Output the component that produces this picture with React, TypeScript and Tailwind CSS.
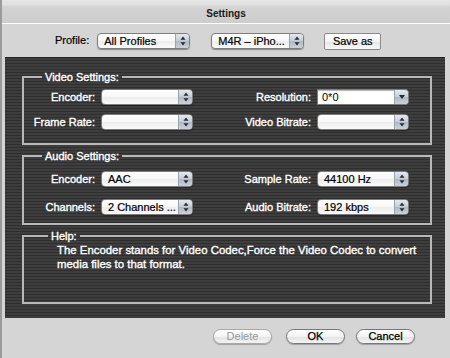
import React from "react";

function Arrows({ single = false }: { single?: boolean }) {
  return (
    <div className="w-[14px] h-full flex items-center justify-center border-l border-[#9aa3ae] bg-[image:linear-gradient(to_bottom,#e4e9ef,#c3ccd7_50%,#aeb9c6_51%,#c9d2dc)] rounded-r-[4px]">
      {single ? (
        <svg width="6" height="4" viewBox="0 0 6 4">
          <path d="M0 0 L6 0 L3 4 Z" fill="#2a2a2a" />
        </svg>
      ) : (
        <svg width="6" height="10" viewBox="0 0 6 10">
          <path d="M3 0.5 L5.5 3.8 L0.5 3.8 Z" fill="#2a2a2a" />
          <path d="M0.5 6.2 L5.5 6.2 L3 9.5 Z" fill="#2a2a2a" />
        </svg>
      )}
    </div>
  );
}

function Select({ value = "", w = "w-[92px]" }: { value?: string; w?: string }) {
  return (
    <div
      className={`${w} h-[16px] flex items-stretch rounded-[4px] border border-[#7d7d7d] bg-[image:linear-gradient(to_bottom,#ffffff,#f7f7f7_50%,#ececec_51%,#fafafa)] shadow-[0_1px_1px_rgba(0,0,0,0.35)] overflow-hidden`}
    >
      <div className="flex-1 pl-[6px] text-[11px] leading-[14px] text-black whitespace-nowrap overflow-hidden [-webkit-text-stroke:0.2px_black]">
        {value}
      </div>
      <Arrows />
    </div>
  );
}

function Combo({ value }: { value: string }) {
  return (
    <div className="w-[92px] h-[16px] flex items-stretch border border-[#7d7d7d] bg-white shadow-[inset_0_1px_1px_rgba(0,0,0,0.3)] rounded-r-[4px]">
      <div className="flex-1 pl-[4px] text-[11px] leading-[14px] text-black">{value}</div>
      <Arrows single />
    </div>
  );
}

function Label({ text, w }: { text: string; w: string }) {
  return (
    <div className={`${w} text-right text-[11px] leading-[14px] text-white [-webkit-text-stroke:0.35px_white] whitespace-nowrap`}>
      {text}
    </div>
  );
}

function Row({ l1, c1, l2, c2 }: { l1: string; c1: React.ReactNode; l2: string; c2: React.ReactNode }) {
  return (
    <div className="flex items-center h-[16px]">
      <Label text={l1} w="w-[71px]" />
      <div className="ml-[6px]">{c1}</div>
      <Label text={l2} w="w-[118px]" />
      <div className="ml-[6px]">{c2}</div>
    </div>
  );
}

function Group({ title, h, legendMl = "ml-[18px]", children }: { title: string; h: string; legendMl?: string; children: React.ReactNode }) {
  return (
    <fieldset className={`w-[410px] ${h} border-2 border-[#b8b8b8] ml-[17px]`}>
      <legend className={`${legendMl} px-[3px] text-[11px] leading-[14px] text-white [-webkit-text-stroke:0.35px_white]`}>
        {title}
      </legend>
      {children}
    </fieldset>
  );
}

function PillButton({ text, disabled = false, ml }: { text: string; disabled?: boolean; ml: string }) {
  return (
    <div
      className={`${ml} w-[59px] h-[15px] rounded-full border ${disabled ? "border-[#a8a8a8] text-[#9a9a9a]" : "border-[#777] text-black [-webkit-text-stroke:0.25px_black]"} bg-[image:linear-gradient(to_bottom,#ffffff,#f3f3f3_50%,#e2e2e2_51%,#f4f4f4)] shadow-[0_1px_1px_rgba(0,0,0,0.25)] flex items-center justify-center text-[11px] leading-[13px]`}
    >
      {text}
    </div>
  );
}

export default function App() {
  return (
    <div className="w-[450px] h-[358px] overflow-hidden bg-[#d5d5d5] border-l-2 border-[#9a9a9a] flex flex-col font-['Liberation_Sans',Arial,sans-serif]">
      {/* title bar */}
      <div className="h-[24px] shrink-0 flex items-center justify-center border-b border-white bg-[image:linear-gradient(to_bottom,#e6e6e6,#e0e0e0_20%,#d3d3d3_30%,#cdcdcd)]">
        <span className="text-[10px] font-bold text-[#1a1a1a] mt-[4px]">Settings</span>
      </div>

      {/* profile row */}
      <div className="h-[33px] shrink-0 flex items-center pl-[53px]">
        <span className="text-[11px] text-black [-webkit-text-stroke:0.2px_black]">Profile:</span>
        <div className="ml-[8px]">
          <Select value="All Profiles" w="w-[93px]" />
        </div>
        <div className="ml-[21px]">
          <Select value="M4R – iPho..." w="w-[93px]" />
        </div>
        <div className="ml-[20px] mt-[2px] w-[57px] h-[17px] rounded-[2px] border border-[#8a8a8a] bg-[image:linear-gradient(to_bottom,#ffffff,#f4f4f4_50%,#e6e6e6_51%,#f7f7f7)] flex items-center justify-center text-[11px] text-black [-webkit-text-stroke:0.2px_black]">
          Save as
        </div>
      </div>

      {/* dark panel */}
      <div className="ml-[3px] w-[440px] h-[261px] shrink-0 border-t border-[#222] bg-[image:repeating-linear-gradient(to_bottom,#3e3e3e_0px,#3e3e3e_2px,#2e2e2e_2px,#2e2e2e_3px)] pt-[12px] flex flex-col gap-[4px]">
        <Group title="Video Settings:" h="h-[75px]">
          <div className="pt-[5px] flex flex-col gap-[9px]">
            <Row l1="Encoder:" c1={<Select />} l2="Resolution:" c2={<Combo value="0*0" />} />
            <Row l1="Frame Rate:" c1={<Select />} l2="Video Bitrate:" c2={<Select />} />
          </div>
        </Group>
        <Group title="Audio Settings:" h="h-[76px]">
          <div className="pt-[8px] flex flex-col gap-[12px]">
            <Row l1="Encoder:" c1={<Select value="AAC" />} l2="Sample Rate:" c2={<Select value="44100 Hz" />} />
            <Row l1="Channels:" c1={<Select value="2 Channels ..." />} l2="Audio Bitrate:" c2={<Select value="192 kbps" />} />
          </div>
        </Group>
        <Group title="Help:" h="h-[75px]" legendMl="ml-[24px]">
          <div className="pl-[33px] pr-[10px] text-[11.4px] leading-[14px] text-white [-webkit-text-stroke:0.35px_white]">
            The Encoder stands for Video Codec,Force the Video Codec to convert media files to that format.
          </div>
        </Group>
      </div>

      {/* bottom buttons */}
      <div className="flex-1 flex items-start pt-[11px]">
        <PillButton text="Delete" disabled ml="ml-[211px]" />
        <PillButton text="OK" ml="ml-[14px]" />
        <PillButton text="Cancel" ml="ml-[11px]" />
      </div>
    </div>
  );
}
